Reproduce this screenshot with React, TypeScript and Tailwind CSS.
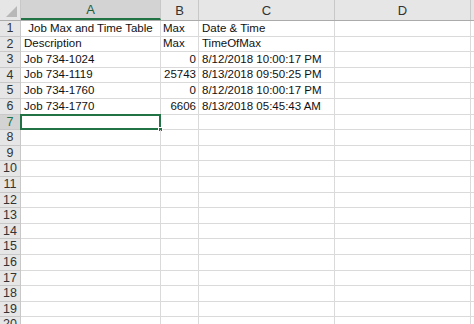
import React from "react";

type Row = { a?: string; aCenter?: boolean; b?: string; bRight?: boolean; c?: string };

const cols = [
  { key: "A", w: "w-[140px]" },
  { key: "B", w: "w-[38px]" },
  { key: "C", w: "w-[136px]" },
  { key: "D", w: "w-[136px]" },
];

const data: Row[] = [
  { a: "Job Max and Time Table", aCenter: true, b: "Max", c: "Date & Time" },
  { a: "Description", b: "Max", c: "TimeOfMax" },
  { a: "Job 734-1024", b: "0", bRight: true, c: "8/12/2018 10:00:17 PM" },
  { a: "Job 734-1119", b: "25743", bRight: true, c: "8/13/2018 09:50:25 PM" },
  { a: "Job 734-1760", b: "0", bRight: true, c: "8/12/2018 10:00:17 PM" },
  { a: "Job 734-1770", b: "6606", bRight: true, c: "8/13/2018 05:45:43 AM" },
];

const ACTIVE_ROW = 7;

export default function App() {
  const rows = Array.from({ length: 20 }, (_, i) => i + 1);

  return (
    <div
      className="w-[474px] h-[324px] overflow-hidden bg-white text-[11.5px] text-[#111] leading-none"
      style={{ fontFamily: '"Liberation Sans", Arial, sans-serif' }}
    >
      {/* column headers */}
      <div className="flex h-[21px] bg-[#e6e6e6] border-b border-[#ababab]">
        <div className="w-[21px] shrink-0 border-r border-[#c8c8c8] flex items-end justify-end p-[3px]">
          <div className="w-0 h-0 border-l-[11px] border-l-transparent border-b-[11px] border-b-[#b8b8b8]" />
        </div>
        {cols.map((c) => (
          <div
            key={c.key}
            className={[
              c.w,
              "shrink-0 flex items-center justify-center text-[13px] border-r border-[#c8c8c8]",
              c.key === "A" ? "bg-[#d3d3d3] border-b-2 border-b-[#217346] text-[#1e5c3a]" : "text-[#333]",
            ].join(" ")}
          >
            {c.key}
          </div>
        ))}
        <div className="flex-1" />
      </div>

      {/* grid rows */}
      {rows.map((r) => {
        const d = data[r - 1];
        const active = r === ACTIVE_ROW;
        return (
          <div key={r} className="flex h-[15.6px]">
            <div
              className={[
                "w-[21px] shrink-0 flex items-center justify-center text-[12.5px] border-r border-b border-[#c8c8c8]",
                active ? "bg-[#d3d3d3] text-[#217346]" : "bg-[#e6e6e6] text-[#333]",
              ].join(" ")}
            >
              {r}
            </div>
            {/* A */}
            <div
              className={[
                "w-[140px] shrink-0 relative flex items-center border-r border-b border-[#dadada] whitespace-nowrap",
                d?.aCenter ? "justify-center" : "pl-[3px]",
              ].join(" ")}
            >
              {d?.a}
              {active && (
                <div className="absolute -left-[1px] -top-[1px] -right-[1px] -bottom-[1px] border-2 border-[#217346]">
                  <div className="absolute -right-[4px] -bottom-[4px] w-[5px] h-[5px] bg-[#217346] border border-white" />
                </div>
              )}
            </div>
            {/* B */}
            <div
              className={[
                "w-[38px] shrink-0 flex items-center border-r border-b border-[#dadada] whitespace-nowrap",
                d?.bRight ? "justify-end pr-[2px]" : "pl-[2px]",
              ].join(" ")}
            >
              {d?.b}
            </div>
            {/* C */}
            <div className="w-[136px] shrink-0 flex items-center pl-[3px] border-r border-b border-[#dadada] whitespace-nowrap">
              {d?.c}
            </div>
            {/* D */}
            <div className="w-[136px] shrink-0 border-r border-b border-[#dadada]" />
            <div className="flex-1 border-b border-[#dadada]" />
          </div>
        );
      })}
    </div>
  );
}
